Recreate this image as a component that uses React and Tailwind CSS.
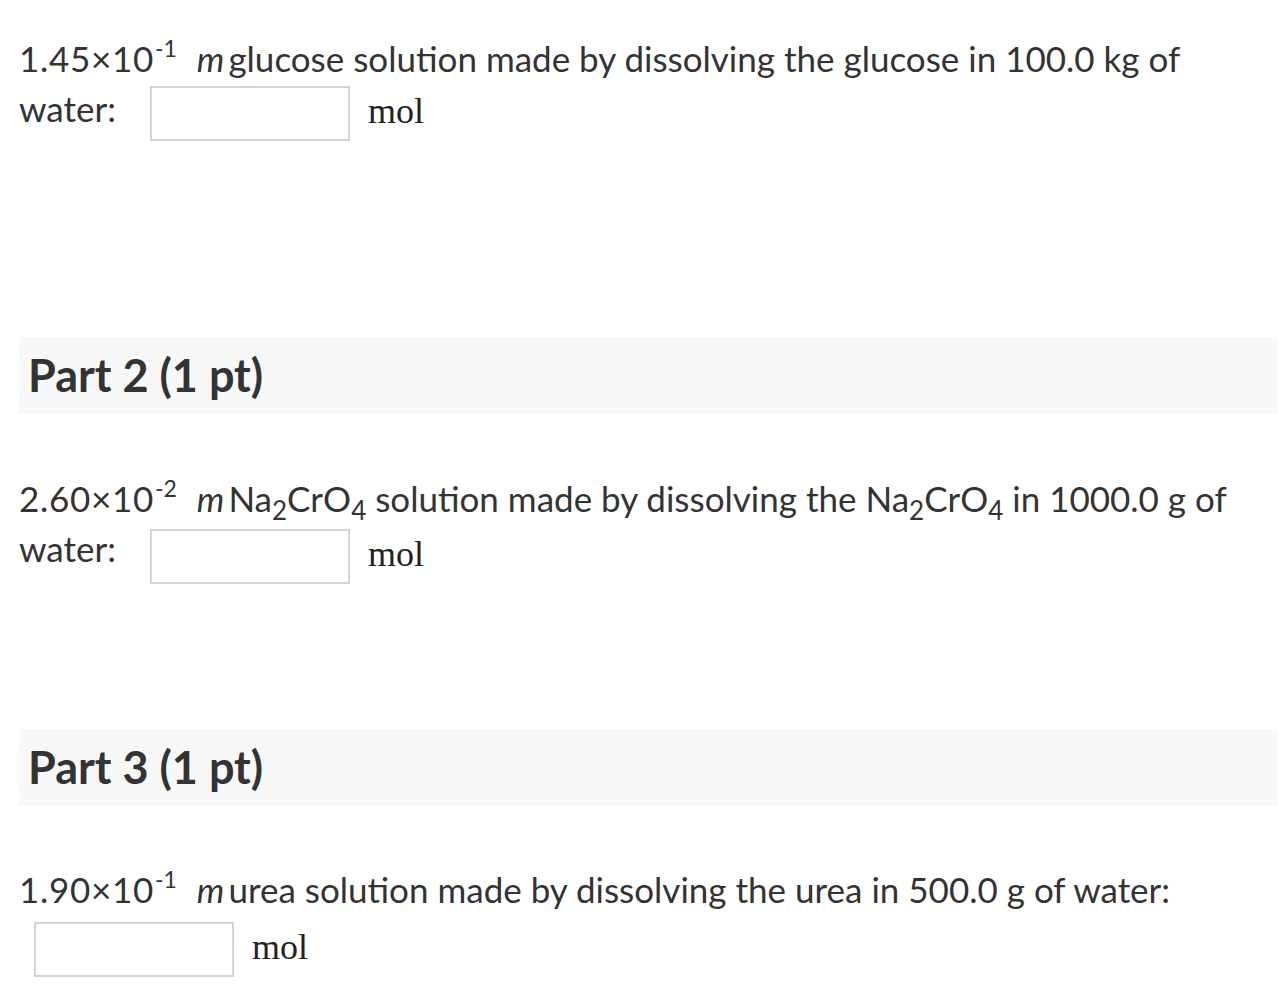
import React from 'react';

const body = { fontFamily: 'Lato, "Open Sans", sans-serif' };
const serif = { fontFamily: '"Liberation Serif", "Times New Roman", serif' };

function Sup({ children }) {
  return <span className="text-[23px] align-[15px] leading-none">{children}</span>;
}

function Sub({ children }) {
  return <span className="text-[26px] align-[-8px] leading-none">{children}</span>;
}

// number × 10^exp followed by an italic molality "m"
function Sci({ base, exp }) {
  return (
    <>
      <span className="tracking-[0.7px]">{base}×10</span>
      <span className="ml-[1px]"><Sup>{exp}</Sup></span>
      <span className="inline-block w-[20px]" />
      <i>m</i>
      <span className="inline-block w-[4px]" />
    </>
  );
}

function Answer({ className = '' }) {
  return (
    <div className={`flex items-start ${className}`}>
      <input
        type="text"
        className="w-[200px] h-[55px] border-2 border-[#d3d3d3] bg-white outline-none"
      />
      <span className="ml-[18px] text-[36px] leading-[50px] text-[#222]" style={serif}>mol</span>
    </div>
  );
}

function PartHeader({ label }) {
  return (
    <div className="h-[77px] bg-[#f8f8f8] flex items-center pl-[9px]">
      <h2 className="text-[45px] font-bold leading-none text-[#333]">{label}</h2>
    </div>
  );
}

export default function App() {
  return (
    <div className="min-h-screen bg-white text-[#333] pl-[19px] pr-[6px] pt-[33px]" style={body}>
      {/* part 1 */}
      <div className="text-[35px] leading-[50px]">
        <div>
          <Sci base="1.45" exp="-1" />glucose solution made by dissolving the glucose in 100.0 kg of
        </div>
        <div className="flex items-start mt-[3px]">
          <span className="mt-[-3px] w-[131px]">water:</span>
          <Answer />
        </div>
      </div>

      <div className="mt-[196px]">
        <PartHeader label="Part 2 (1 pt)" />
      </div>

      {/* part 2 */}
      <div className="text-[35px] leading-[50px] mt-[59px]">
        <div>
          <Sci base="2.60" exp="-2" />Na<Sub>2</Sub>CrO<Sub>4</Sub> solution made by dissolving the Na<Sub>2</Sub>CrO<Sub>4</Sub> in 1000.0 g of
        </div>
        <div className="flex items-start mt-[6px]">
          <span className="mt-[-6px] w-[131px]">water:</span>
          <Answer />
        </div>
      </div>

      <div className="mt-[145px]">
        <PartHeader label="Part 3 (1 pt)" />
      </div>

      {/* part 3 */}
      <div className="text-[35px] leading-[50px] mt-[58px]">
        <div>
          <Sci base="1.90" exp="-1" />urea solution made by dissolving the urea in 500.0 g of water:
        </div>
        <Answer className="mt-[8px] ml-[15px]" />
      </div>
    </div>
  );
}
